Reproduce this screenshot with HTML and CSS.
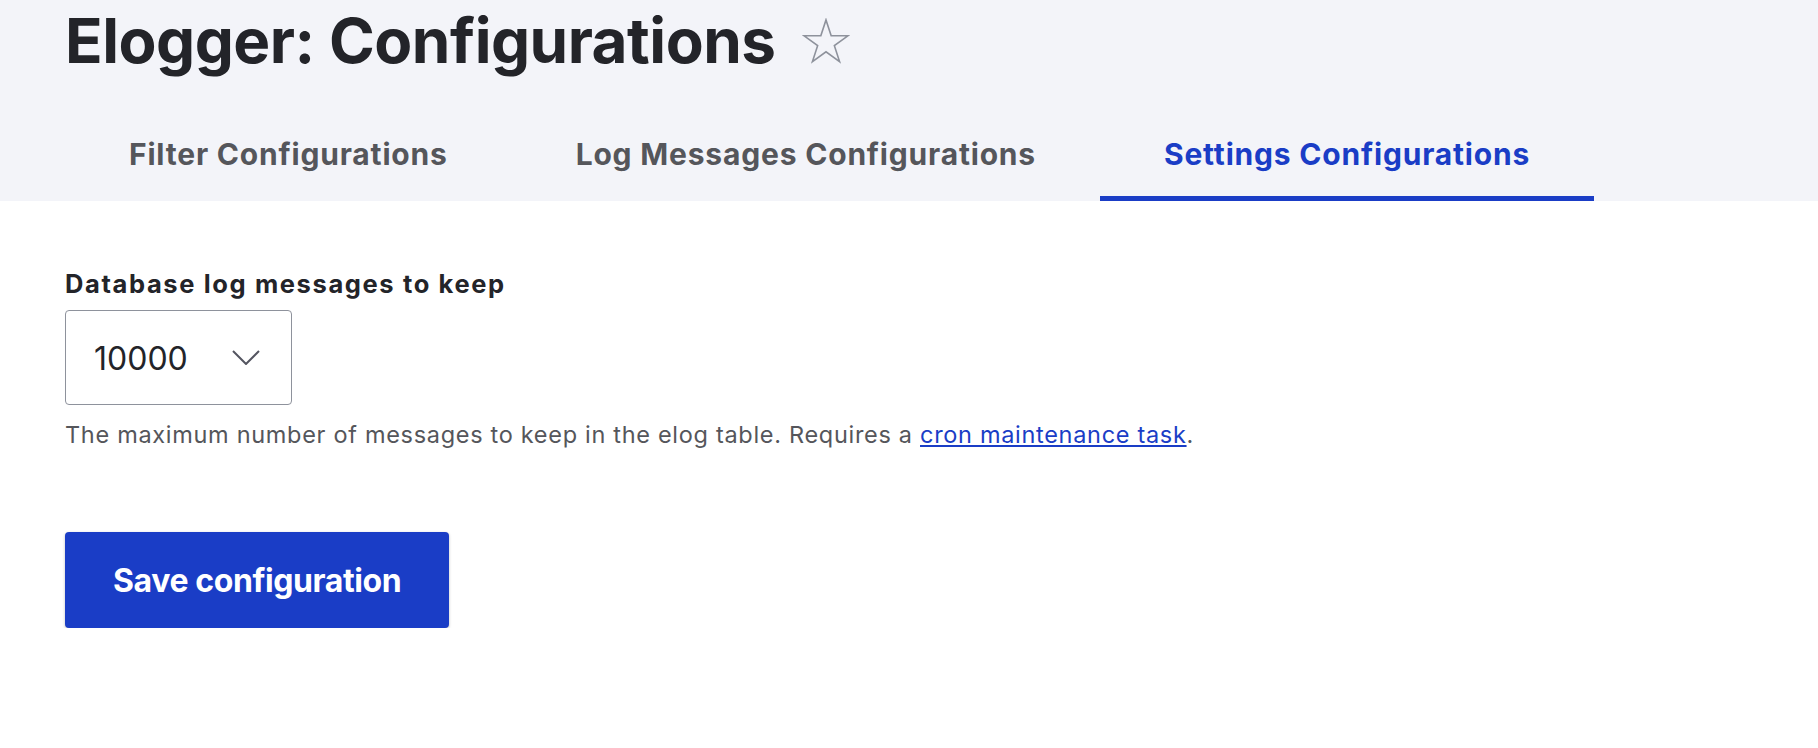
FILE: index.html
```html
<!DOCTYPE html>
<html lang="en">
<head>
<meta charset="utf-8">
<title>Elogger: Configurations</title>
<link rel="stylesheet" href="styles.css">
</head>
<body>
<header class="page-header">
  <div class="title-row">
    <h1 class="page-title">Elogger: Configurations</h1>
    <svg class="star" width="48" height="46" viewBox="0 0 50 46" aria-hidden="true">
      <polygon points="25,1 30.39,17.58 47.83,17.58 33.72,27.83 39.11,44.42 25,34.17 10.89,44.42 16.28,27.83 2.17,17.58 19.61,17.58" fill="none" stroke="#8e929c" stroke-width="1.7" stroke-linejoin="miter"/>
    </svg>
  </div>
  <nav class="tabs">
    <a class="tab" href="#">Filter Configurations</a>
    <a class="tab" href="#">Log Messages Configurations</a>
    <a class="tab tab--active" href="#">Settings Configurations</a>
  </nav>
</header>
<main class="content">
  <form class="form">
    <div class="form-item">
      <label class="form-label" for="row-limit">Database log messages to keep</label>
      <div class="select-wrap">
        <select id="row-limit" class="select">
          <option>10000</option>
        </select>
        <svg class="chevron" width="28" height="15" viewBox="0 0 28 15" aria-hidden="true">
          <polyline points="1,1 14,14 27,1" fill="none" stroke="#545560" stroke-width="2"/>
        </svg>
      </div>
      <div class="description">The maximum number of messages to keep in the elog table. Requires a <a href="#">cron maintenance task</a>.</div>
    </div>
    <button type="button" class="button">Save configuration</button>
  </form>
</main>
</body>
</html>
```
FILE: styles.css
```css
html, body {
  margin: 0;
  padding: 0;
  background: #ffffff;
}
body {
  font-family: Inter, "Noto Sans", sans-serif;
  color: #232429;
}
.page-header {
  background: #f3f4f9;
  padding: 4px 65px 0;
}
.title-row {
  display: flex;
  align-items: center;
  gap: 26px;
}
.page-title {
  margin: 0;
  font-size: 62px;
  line-height: 74px;
  font-weight: 700;
  letter-spacing: -0.008em;
  color: #232429;
}
.star {
  display: block;
}
.tabs {
  display: flex;
  margin-top: 29px;
}
.tab {
  display: block;
  padding: 29px 64px 24px;
  font-size: 30px;
  line-height: 36px;
  font-weight: 700;
  letter-spacing: 0.027em;
  color: #55565b;
  text-decoration: none;
  border-bottom: 5px solid transparent;
}
.tab--active {
  color: #1a3dc6;
  border-bottom-color: #1a3dc6;
}
.content {
  padding: 68px 65px 0;
}
.form-label {
  display: block;
  font-size: 25.5px;
  line-height: 30px;
  font-weight: 700;
  letter-spacing: 1.62px;
  color: #232429;
}
.select-wrap {
  position: relative;
  width: 227px;
  margin-top: 11px;
}
.select {
  display: block;
  appearance: none;
  -webkit-appearance: none;
  box-sizing: border-box;
  width: 227px;
  height: 95px;
  margin: 0;
  padding: 2px 60px 0 28px;
  border: 1px solid #8e929c;
  border-radius: 4px;
  background: #ffffff;
  font-family: Inter, "Noto Sans", sans-serif;
  font-size: 32px;
  color: #232429;
}
.chevron {
  position: absolute;
  right: 32px;
  top: 40px;
}
.description {
  margin-top: 12px;
  font-size: 23.5px;
  line-height: 35px;
  letter-spacing: 0.0295em;
  color: #55565b;
}
.description a {
  color: #1a3dc6;
  text-decoration: underline;
}
.button {
  display: block;
  box-sizing: border-box;
  height: 96px;
  margin-top: 80px;
  padding: 0 48px;
  border: 0;
  border-radius: 4px;
  background: #1a3dc6;
  color: #ffffff;
  font-family: Inter, "Noto Sans", sans-serif;
  font-size: 32px;
  font-weight: 700;
  letter-spacing: -0.4px;
  box-shadow: 0 1px 3px rgba(0, 0, 0, 0.25);
}
```
